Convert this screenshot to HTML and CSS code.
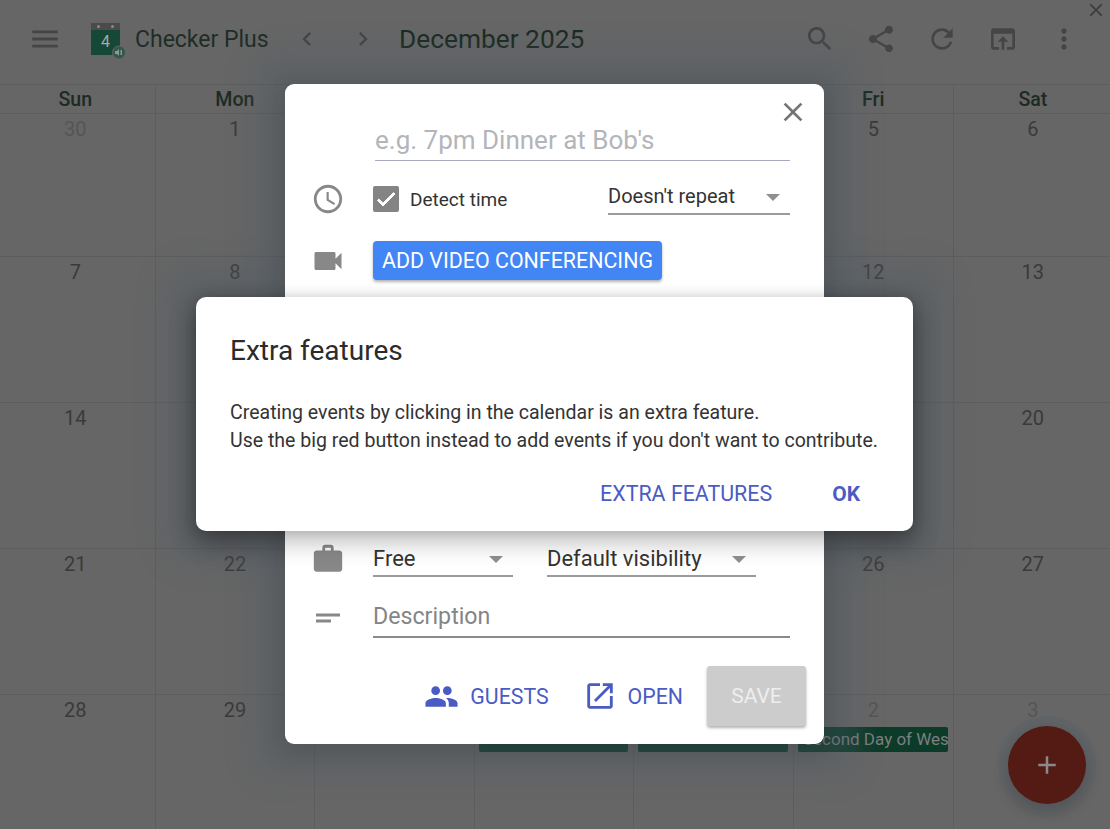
FILE: index.html
```html
<!DOCTYPE html>
<html lang="en">
<head>
<meta charset="utf-8">
<title>Checker Plus</title>
<link rel="stylesheet" href="styles.css">
</head>
<body>
<div class="page">
  <header class="toolbar">
    <svg class="tb-icon menu" viewBox="0 0 24 24"><path d="M3 18h18v-2H3v2zm0-5h18v-2H3v2zm0-7v2h18V6H3z"/></svg>
    <div class="logo">
      <svg class="logo-art" viewBox="0 0 32 36">
        <rect class="logo-top" x="0" y="0" width="29" height="9"/>
        <rect class="logo-body" x="0" y="7" width="29" height="25"/>
        <circle class="logo-dot" cx="7.5" cy="3.5" r="1.5"/>
        <circle class="logo-dot" cx="21.5" cy="3.5" r="1.5"/>
        <circle class="logo-badge" cx="28" cy="29.5" r="6.5"/>
        <path class="logo-speaker" d="M24 28h2l2-2v7l-2-2h-2zM29.5 27h1.5v5h-1.5z"/>
      </svg>
      <span class="logo-num">4</span>
    </div>
    <span class="app-name">Checker Plus</span>
    <svg class="tb-icon nav prev" viewBox="0 0 24 24"><path d="M15.41 7.41L14 6l-6 6 6 6 1.41-1.41L10.83 12z"/></svg>
    <svg class="tb-icon nav next" viewBox="0 0 24 24"><path d="M10 6L8.59 7.41 13.17 12l-4.58 4.59L10 18l6-6z"/></svg>
    <h1 class="month">December 2025</h1>
    <div class="tb-actions">
      <svg class="tb-icon" viewBox="0 0 24 24"><path d="M15.5 14h-.79l-.28-.27C15.41 12.59 16 11.11 16 9.5 16 5.91 13.09 3 9.5 3S3 5.91 3 9.5 5.91 16 9.5 16c1.61 0 3.09-.59 4.23-1.57l.27.28v.79l5 4.99L20.49 19l-4.99-5zm-6 0C7.01 14 5 11.99 5 9.5S7.01 5 9.5 5 14 7.01 14 9.5 11.99 14 9.5 14z"/></svg>
      <svg class="tb-icon" viewBox="0 0 24 24"><path d="M18 16.08c-.76 0-1.44.3-1.96.77L8.91 12.7c.05-.23.09-.46.09-.7s-.04-.47-.09-.7l7.05-4.11c.54.5 1.25.81 2.04.81 1.66 0 3-1.34 3-3s-1.34-3-3-3-3 1.34-3 3c0 .24.04.47.09.7L8.04 9.81C7.5 9.31 6.79 9 6 9c-1.66 0-3 1.34-3 3s1.34 3 3 3c.79 0 1.5-.31 2.04-.81l7.12 4.16c-.05.21-.08.43-.08.65 0 1.61 1.31 2.92 2.92 2.92 1.61 0 2.92-1.31 2.92-2.92s-1.31-2.92-2.92-2.92z"/></svg>
      <svg class="tb-icon" viewBox="0 0 24 24"><path d="M17.65 6.35C16.2 4.9 14.21 4 12 4c-4.42 0-7.99 3.58-7.99 8s3.57 8 7.99 8c3.73 0 6.84-2.55 7.73-6h-2.08c-.82 2.33-3.04 4-5.65 4-3.31 0-6-2.69-6-6s2.69-6 6-6c1.66 0 3.14.69 4.22 1.78L13 11h7V4l-2.35 2.35z"/></svg>
      <svg class="tb-icon" viewBox="0 0 24 24"><path d="M19 4H5c-1.11 0-2 .9-2 2v12c0 1.1.89 2 2 2h4v-2H5V8h14v10h-4v2h4c1.1 0 2-.9 2-2V6c0-1.1-.89-2-2-2zm-7 6l-4 4h3v6h2v-6h3l-4-4z"/></svg>
      <svg class="tb-icon" viewBox="0 0 24 24"><path d="M12 8c1.1 0 2-.9 2-2s-.9-2-2-2-2 .9-2 2 .9 2 2 2zm0 2c-1.1 0-2 .9-2 2s.9 2 2 2 2-.9 2-2-.9-2-2-2zm0 6c-1.1 0-2 .9-2 2s.9 2 2 2 2-.9 2-2-.9-2-2-2z"/></svg>
    </div>
  </header>

  <div class="weekdays">
    <div class="wd">Sun</div><div class="wd">Mon</div><div class="wd"></div><div class="wd"></div><div class="wd"></div><div class="wd">Fri</div><div class="wd">Sat</div>
  </div>

  <main class="month-grid">
    <div class="day muted">30</div><div class="day">1</div><div class="day"></div><div class="day"></div><div class="day"></div><div class="day">5</div><div class="day">6</div>
    <div class="day">7</div><div class="day">8</div><div class="day"></div><div class="day"></div><div class="day"></div><div class="day">12</div><div class="day">13</div>
    <div class="day">14</div><div class="day"></div><div class="day"></div><div class="day"></div><div class="day"></div><div class="day"></div><div class="day">20</div>
    <div class="day">21</div><div class="day">22</div><div class="day"></div><div class="day"></div><div class="day"></div><div class="day">26</div><div class="day">27</div>
    <div class="day">28</div><div class="day">29</div><div class="day"></div>
    <div class="day"><div class="chip chip-solo"></div></div>
    <div class="day"><div class="chip chip-solo"></div></div>
    <div class="day muted">2<div class="chip">Second Day of West</div></div>
    <div class="day muted">3</div>
  </main>

  <svg class="win-close" viewBox="0 0 24 24"><path d="M19 6.41L17.59 5 12 10.59 6.41 5 5 6.41 10.59 12 5 17.59 6.41 19 12 13.41 17.59 19 19 17.59 13.41 12z"/></svg>

  <div class="fab"><svg viewBox="0 0 24 24"><path d="M19 13h-6v6h-2v-6H5v-2h6V5h2v6h6v2z"/></svg></div>

  <div class="alert-halo"></div>

  <section class="event-dialog">
    <svg class="dlg-close" viewBox="0 0 24 24"><path d="M19 6.41L17.59 5 12 10.59 6.41 5 5 6.41 10.59 12 5 17.59 6.41 19 12 13.41 17.59 19 19 17.59 13.41 12z"/></svg>

    <div class="row row-title">
      <div class="field title-field">e.g. 7pm Dinner at Bob's</div>
    </div>

    <div class="row row-time">
      <svg class="row-icon icon-sm" viewBox="0 0 24 24"><path d="M11.99 2C6.47 2 2 6.48 2 12s4.47 10 9.99 10C17.52 22 22 17.52 22 12S17.52 2 11.99 2zM12 20c-4.42 0-8-3.58-8-8s3.58-8 8-8 8 3.58 8 8-3.58 8-8 8zm.5-13H11v6l5.25 3.15.75-1.23-4.5-2.67z"/></svg>
      <div class="check"><svg viewBox="0 0 24 24"><path d="M9 16.17L4.83 12l-1.42 1.41L9 19 21 7l-1.41-1.41z"/></svg></div>
      <span class="check-label">Detect time</span>
      <div class="select repeat">Doesn't repeat<i class="caret"></i></div>
    </div>

    <div class="row row-video">
      <svg class="row-icon" viewBox="0 0 24 24"><path d="M17 10.5V7c0-.55-.45-1-1-1H4c-.55 0-1 .45-1 1v10c0 .55.45 1 1 1h12c.55 0 1-.45 1-1v-3.5l4 4v-11l-4 4z"/></svg>
      <button class="video-btn">ADD VIDEO CONFERENCING</button>
    </div>

    <div class="row row-status">
      <svg class="row-icon icon-sm" viewBox="0 0 24 24"><path d="M20 6h-4V4c0-1.11-.89-2-2-2h-4c-1.11 0-2 .89-2 2v2H4c-1.11 0-1.99.89-1.99 2L2 19c0 1.11.89 2 2 2h16c1.11 0 2-.89 2-2V8c0-1.11-.89-2-2-2zm-6 0h-4V4h4v2z"/></svg>
      <div class="select free">Free<i class="caret"></i></div>
      <div class="select visibility">Default visibility<i class="caret"></i></div>
    </div>

    <div class="row row-desc">
      <svg class="row-icon" viewBox="0 0 24 24"><path d="M4 9h16v2H4zm0 4h10v2H4z"/></svg>
      <div class="field desc-field">Description</div>
    </div>

    <div class="actions">
      <span class="action">
        <svg class="guests-icon" viewBox="0 0 24 24"><path d="M16 11c1.66 0 2.99-1.34 2.99-3S17.66 5 16 5c-1.66 0-3 1.34-3 3s1.34 3 3 3zm-8 0c1.66 0 2.99-1.34 2.99-3S9.66 5 8 5C6.34 5 5 6.34 5 8s1.34 3 3 3zm0 2c-2.33 0-7 1.17-7 3.5V19h14v-2.5c0-2.33-4.67-3.5-7-3.5zm8 0c-.29 0-.62.02-.97.05 1.16.84 1.97 1.97 1.97 3.45V19h6v-2.5c0-2.33-4.67-3.5-7-3.5z"/></svg>
        GUESTS
      </span>
      <span class="action">
        <svg class="open-icon" viewBox="0 0 24 24"><path d="M19 19H5V5h7V3H5c-1.11 0-2 .9-2 2v14c0 1.1.89 2 2 2h14c1.1 0 2-.9 2-2v-7h-2v7zM14 3v2h3.59l-9.83 9.83 1.41 1.41L19 6.41V10h2V3h-7z"/></svg>
        OPEN
      </span>
      <button class="save-btn">SAVE</button>
    </div>
  </section>

  <section class="alert-dialog">
    <h2 class="alert-title">Extra features</h2>
    <p class="alert-body">Creating events by clicking in the calendar is an extra feature.<br>Use the big red button instead to add events if you don't want to contribute.</p>
    <div class="alert-actions">
      <span class="alert-link">EXTRA FEATURES</span>
      <span class="alert-link ok">OK</span>
    </div>
  </section>
</div>
</body>
</html>
```
FILE: styles.css
```css
* { box-sizing: border-box; }
html, body { margin: 0; height: 100%; }
body { overflow: hidden; background: #666; font-family: Roboto, "Liberation Sans", sans-serif; }
.page { position: relative; width: 1110px; height: 829px; overflow: hidden; background: #666; }

/* toolbar */
.toolbar { display: flex; align-items: center; height: 85px; padding: 0 0 6px 28px; border-bottom: 1px solid #5d5d5d; }
.tb-icon { width: 32px; height: 32px; fill: #454545; flex: none; }
.menu { width: 34px; height: 34px; margin-right: 29px; }
.logo { position: relative; width: 32px; height: 36px; margin-top: 4px; flex: none; }
.logo-art { display: block; width: 32px; height: 36px; overflow: visible; }
.logo-top { fill: #4b4b4b; }
.logo-body { fill: #154836; }
.logo-dot { fill: #8a8a8a; }
.logo-badge { fill: #34574a; stroke: #666; stroke-width: 1; }
.logo-speaker { fill: #8a9a92; }
.logo-num { position: absolute; left: 8px; top: 9px; width: 13px; text-align: center; font-size: 16px; line-height: 20px; color: #a9a9a9; }
.app-name { margin-left: 12px; font-size: 23px; color: #1f2d27; width: 153px; flex: none; white-space: nowrap; }
.nav { width: 28px; height: 28px; fill: #454545; }
.prev { margin-left: 5px; }
.next { margin-left: 28px; }
.month { margin: 0 0 0 22px; font-size: 26.3px; font-weight: 400; color: #1a2a23; flex: none; }
.tb-actions { margin-left: auto; display: flex; gap: 29px; padding-right: 30px; }

/* calendar */
.weekdays, .month-grid { display: grid; grid-template-columns: repeat(7, 159.6px); margin-left: -4px; width: 1120px; }
.weekdays { height: 29px; border-bottom: 1px solid #5d5d5d; }
.wd { text-align: center; font-size: 19.6px; font-weight: 500; line-height: 30px; color: #1c2b24; border-right: 1px solid #5d5d5d; }
.month-grid { grid-template-rows: 143px repeat(4, 146px); }
.day { text-align: center; font-size: 20px; line-height: 30px; color: #3a3a3a; border-right: 1px solid #5d5d5d; border-bottom: 1px solid #5d5d5d; }
.day.muted { color: #555; }
.chip { height: 25px; margin: 2px 5px 0 4px; padding-left: 5px; background: #0c3b2a; border-radius: 2px; font-size: 17px; line-height: 25px; color: #7e7e7e; text-align: left; white-space: nowrap; overflow: hidden; }
.chip-solo { margin-top: 32px; }

.win-close { position: absolute; left: 1085px; top: -1px; width: 22px; height: 22px; fill: #3f3f3f; }

.fab { position: absolute; left: 1008px; top: 726px; width: 78px; height: 78px; border-radius: 50%; background: #541a14; display: flex; align-items: center; justify-content: center; box-shadow: 0 0 0 10px rgba(92,98,104,.45), 0 6px 14px 2px rgba(0,0,0,.25); }
.fab svg { width: 30px; height: 30px; fill: #8a8a8a; }

/* halo behind the stacked dialogs */
.alert-halo { position: absolute; left: 196px; top: 297px; width: 717px; height: 234px; border-radius: 10px; box-shadow: 0 0 24px 36px rgba(84,92,102,.32), 0 8px 24px 4px rgba(0,0,0,.2); }

/* event dialog */
.event-dialog { position: absolute; left: 285px; top: 84px; width: 539px; height: 660px; background: #fff; border-radius: 9px; padding-top: 38px; box-shadow: 0 0 24px 36px rgba(84,92,102,.32), 0 4px 22px 6px rgba(0,0,0,.18); }
.dlg-close { position: absolute; right: 15px; top: 12px; width: 32px; height: 32px; fill: #757575; }
.row { display: flex; align-items: center; padding-left: 25px; }
.row-icon { width: 36px; height: 36px; fill: #888; flex: none; margin-right: 27px; }
.icon-sm { width: 34px; height: 34px; margin: 0 28px 0 1px; }
.field { font-size: 26px; line-height: 36px; white-space: nowrap; }
.title-field { margin-left: 65px; width: 415px; height: 39px; color: #b3b5ba; border-bottom: 1px solid #a7a9bd; }
.row-time { margin-top: 16px; height: 44px; }
.check { width: 26px; height: 26px; background: #848484; border-radius: 2px; display: flex; align-items: center; justify-content: center; flex: none; }
.check svg { width: 24px; height: 24px; fill: #fff; stroke: #fff; stroke-width: 1; }
.check-label { margin-left: 11px; font-size: 19px; color: #333; width: 198px; }
.select { position: relative; font-size: 22px; color: #333; border-bottom: 2px solid #9b9b9b; height: 36px; line-height: 35px; flex: none; }
.repeat { width: 182px; margin-top: -4px; font-size: 20px; line-height: 34px; }
.caret { position: absolute; right: 10px; top: 15px; width: 0; height: 0; border: 7px solid transparent; border-top: 7px solid #8f8f8f; border-bottom: 0; }
.row-video { margin-top: 20px; height: 39px; }
.video-btn { width: 289px; height: 39px; border: 0; border-radius: 4px; background: #4285f4; color: #fff; font: 400 21.4px Roboto, sans-serif; padding: 0; white-space: nowrap; box-shadow: 0 2px 3px rgba(0,0,0,.3); }
.row-status { margin-top: 260px; height: 38px; }
.free { width: 140px; }
.visibility { margin-left: 34px; width: 209px; }
.row-desc { margin-top: 20px; height: 40px; }
.desc-field { width: 417px; height: 40px; color: #858585; border-bottom: 2px solid #8a8a8a; font-size: 23.2px; }
.actions { display: flex; align-items: center; justify-content: flex-end; margin-top: 28px; padding-right: 18px; height: 60px; }
.action { display: flex; align-items: center; color: #4a5cc4; font-size: 21.3px; }
.guests-icon { width: 35px; height: 35px; fill: #4a5cc4; margin-right: 11px; }
.open-icon { width: 34px; height: 34px; fill: #4a5cc4; margin: 0 11px 0 34px; }
.save-btn { width: 99px; height: 60px; margin-left: 24px; border: 0; border-radius: 3px; background: #ccc; color: #eee; font: 400 21px Roboto, sans-serif; box-shadow: 0 2px 3px rgba(0,0,0,.3); }

/* alert */
.alert-dialog { position: absolute; left: 196px; top: 297px; width: 717px; height: 234px; background: #fff; border-radius: 10px; padding: 36px 34px 0; box-shadow: 0 10px 26px rgba(0,0,0,.28), 0 0 12px rgba(0,0,0,.12); }
.alert-title { margin: 0; font-size: 28px; font-weight: 400; line-height: 36px; color: #2b2b2b; }
.alert-body { margin: 30px 0 0; font-size: 19.55px; line-height: 28px; color: #333; white-space: nowrap; }
.alert-actions { display: flex; justify-content: flex-end; gap: 60px; margin-top: 25px; padding-right: 19px; }
.alert-link { font-size: 21.4px; line-height: 28px; color: #4a5cc4; white-space: nowrap; }
.ok { font-weight: 700; font-size: 21px; }
```
